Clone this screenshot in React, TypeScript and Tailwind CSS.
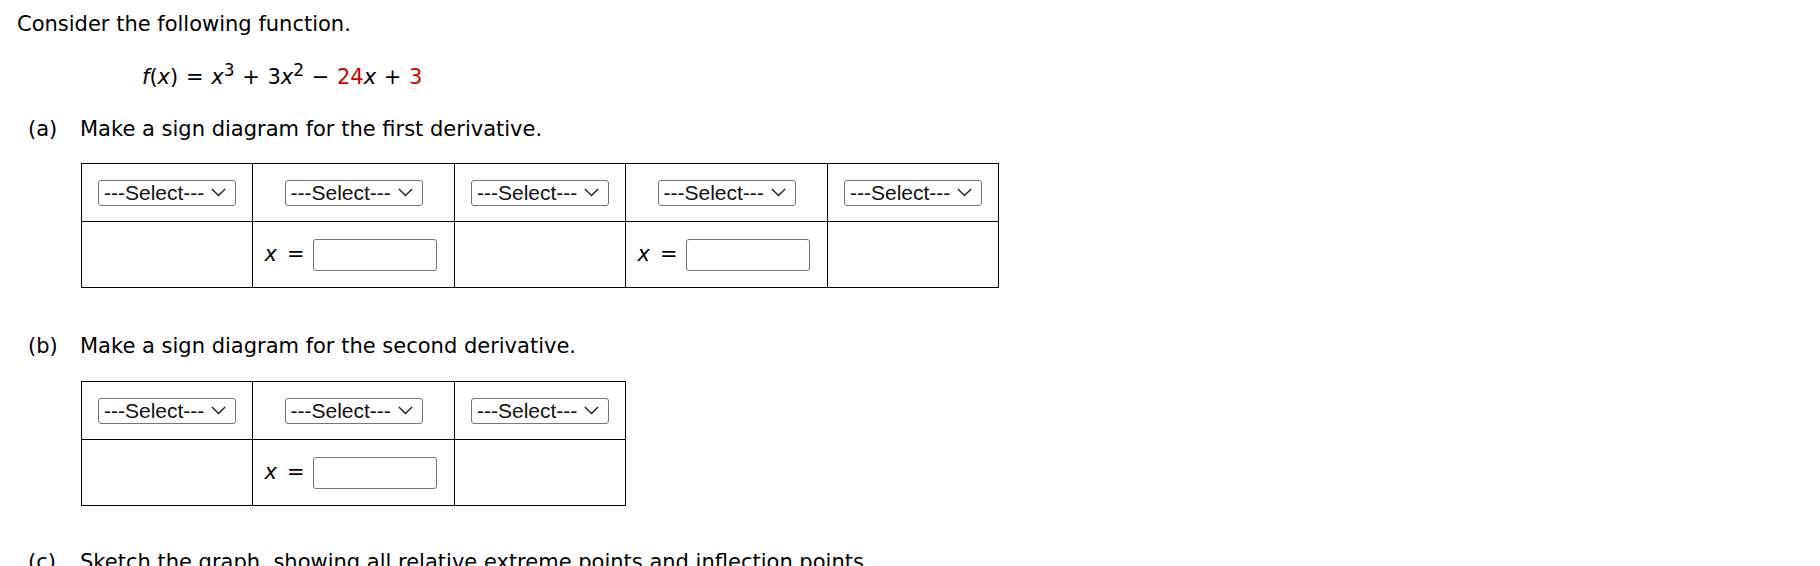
import React from "react";

const Sel = () => (
  <div className="flex h-[26px] w-[138px] items-center justify-between rounded-[3px] border border-[#767676] bg-white pl-[5px] pr-[9px] font-['Liberation_Sans',Arial,sans-serif] text-[21px] leading-none text-[#111]">
    <span>---Select---</span>
    <svg width="15" height="9" viewBox="0 0 15 9" className="shrink-0">
      <path d="M0.9 0.9 L7.5 7.6 L14.1 0.9" fill="none" stroke="#222" strokeWidth="1.4" />
    </svg>
  </div>
);

const XCell = () => (
  <div className="flex items-center justify-center bg-white pr-[6px]">
    <span className="italic">x</span>
    <span className="ml-[10px]">=</span>
    <div className="ml-[8px] h-[32px] w-[124px] rounded-[3px] border border-[#767676] bg-white" />
  </div>
);

const SelCell = () => (
  <div className="flex items-center justify-center bg-white">
    <Sel />
  </div>
);

const Empty = () => <div className="bg-white" />;

const Section = ({
  label,
  text,
  className,
  children,
}: {
  label: string;
  text: string;
  className?: string;
  children?: React.ReactNode;
}) => (
  <div className={"flex pl-[11px] " + (className ?? "")}>
    <div className="w-[52px] shrink-0">{label}</div>
    <div className="flex flex-col">
      <p className="whitespace-nowrap">{text}</p>
      {children}
    </div>
  </div>
);

export default function App() {
  return (
    <div className="h-[566px] overflow-hidden bg-white pl-[17px] pt-[12px] font-['DejaVu_Sans',Verdana,sans-serif] text-[21px] leading-[25px] text-black">
      <p>Consider the following function.</p>
      <p className="mt-[28px] pl-[125px] [word-spacing:1px]">
        <i>f</i>(<i>x</i>) = <i>x</i>
        <sup className="-top-[8px] text-[17px]">3</sup> + 3<i>x</i>
        <sup className="-top-[8px] text-[17px]">2</sup> − <span className="text-[#cc0000]">24</span>
        <i>x</i> + <span className="text-[#cc0000]">3</span>
      </p>

      <Section label="(a)" text="Make a sign diagram for the first derivative." className="mt-[27px]">
        <div className="ml-[1px] mt-[21px] grid w-fit grid-cols-[170px_201px_170px_201px_170px] grid-rows-[57px_65px] gap-px border border-black bg-black">
          <SelCell />
          <SelCell />
          <SelCell />
          <SelCell />
          <SelCell />
          <Empty />
          <XCell />
          <Empty />
          <XCell />
          <Empty />
        </div>
      </Section>

      <Section label="(b)" text="Make a sign diagram for the second derivative." className="mt-[46px]">
        <div className="ml-[1px] mt-[22px] grid w-fit grid-cols-[170px_201px_170px] grid-rows-[57px_65px] gap-px border border-black bg-black">
          <SelCell />
          <SelCell />
          <SelCell />
          <Empty />
          <XCell />
          <Empty />
        </div>
      </Section>

      <Section
        label="(c)"
        text="Sketch the graph, showing all relative extreme points and inflection points."
        className="mt-[44px]"
      />
    </div>
  );
}
